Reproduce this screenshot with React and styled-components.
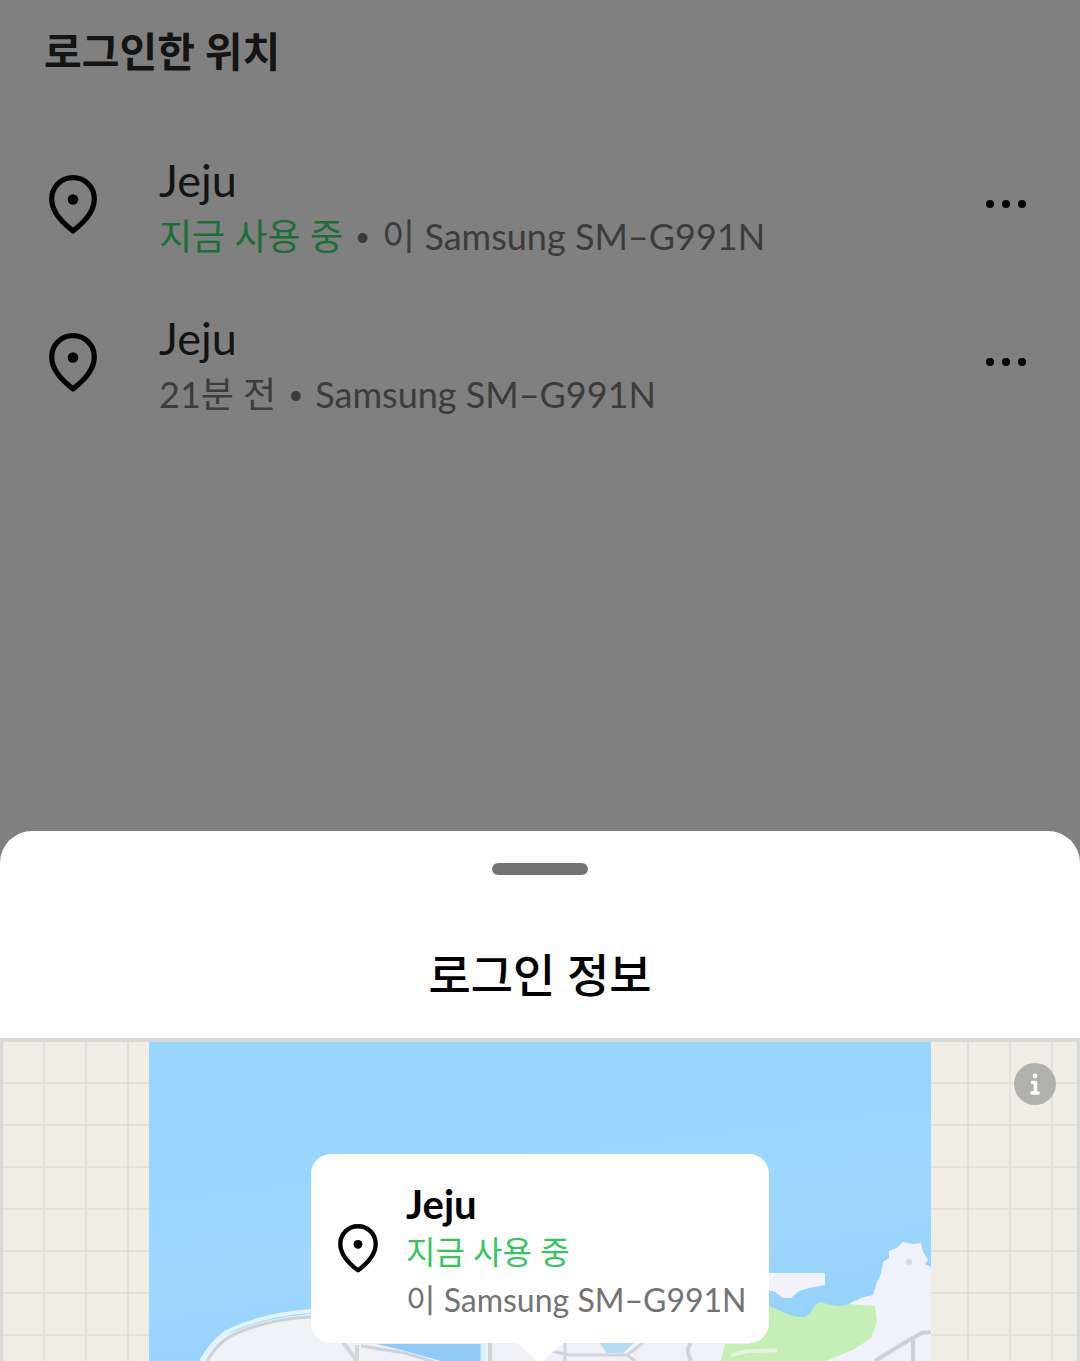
import React from 'react';
import styled, { createGlobalStyle } from 'styled-components';

const GlobalStyle = createGlobalStyle`
  * {
    box-sizing: border-box;
  }
  body {
    margin: 0;
    background-color: #808080;
    font-family: Lato, "Noto Sans CJK KR", sans-serif;
  }
  h1, h2, p, ul {
    margin: 0;
    padding: 0;
  }
`
const Wrapper = styled.div`
  width: 100%;
  min-height: 100vh;
  display: flex;
  flex-direction: column;
  background-color: #808080;
`
const LoginSection = styled.main`
  flex: 1;
  padding: 20px 44px;
`
const SectionTitle = styled.h1`
  color: #141414;
  font-size: 41px;
  line-height: 64px;
  font-weight: 700;
`
const LoginList = styled.ul`
  margin-top: 68px;
  list-style: none;
`
const LoginItem = styled.li`
  display: flex;
  align-items: center;
  height: 104px;
  margin-bottom: 54px;
`
const PinSlot = styled.div`
  display: flex;
  flex: none;
  width: 115px;
  padding-left: 5px;
`
const LoginInfo = styled.div`
  flex: 1;
  padding-top: 10px;
`
const City = styled.p`
  color: #141414;
  font-size: 45px;
  line-height: 56px;
`
const Detail = styled.p`
  color: #3c3c3c;
  font-size: 36px;
  line-height: 56px;
`
const Active = styled.span`
  color: #1c6e37;
`
const Bullet = styled.span`
  margin: 0 4px;
  font-family: "Liberation Sans", sans-serif;
`
const MenuButton = styled.button`
  display: flex;
  justify-content: center;
  align-items: center;
  width: 60px;
  height: 60px;
  padding: 0;
  border: none;
  background: none;
`
const Sheet = styled.section`
  background-color: #fff;
  border-radius: 32px 32px 0 0;
  overflow: hidden;
`
const SheetHeader = styled.header`
  display: flex;
  flex-direction: column;
  align-items: center;
  height: 207px;
  padding-top: 32px;
`
const Handle = styled.div`
  width: 96px;
  height: 12px;
  border-radius: 6px;
  background-color: #737373;
`
const SheetTitle = styled.h2`
  margin-top: 66px;
  color: #000;
  font-size: 46px;
  line-height: 68px;
  font-weight: 500;
`
const MapFrame = styled.div`
  position: relative;
  display: flex;
  justify-content: center;
  height: 323px;
  border: 3px solid #d9d9d9;
  border-top-width: 4px;
  border-bottom: none;
  background-color: #f0ede5;
  background-image:
    linear-gradient(to right, transparent 40px, #e2e0d9 40px),
    linear-gradient(to bottom, transparent 40px, #e5e2da 40px);
  background-size: 42px 42px;
`
const MapTile = styled.svg`
  display: block;
  width: 782px;
  height: 319px;
`
const InfoButton = styled.button`
  position: absolute;
  top: 21px;
  right: 21px;
  width: 42px;
  height: 42px;
  padding: 0;
  border: none;
  border-radius: 50%;
  background: none;
`
const Callout = styled.div`
  position: absolute;
  top: 112px;
  left: 50%;
  transform: translateX(-50%);
  display: flex;
  align-items: center;
  width: 458px;
  height: 189px;
  padding-left: 27px;
  border-radius: 20px;
  background-color: #fff;
`
const CalloutText = styled.div`
  margin-left: 28px;
  padding-top: 6px;
  white-space: nowrap;
`
const CalloutCity = styled.p`
  color: #000;
  font-size: 40px;
  line-height: 48px;
  font-weight: 700;
`
const CalloutLine = styled.p`
  color: ${(props) => props.$color};
  font-size: 32px;
  line-height: 48px;
`
const Tail = styled.svg`
  position: absolute;
  top: 100%;
  left: 50%;
  transform: translateX(-50%);
`

function Pin({ width, height }) {
  return (
    <svg width={width} height={height} viewBox="0 0 48 59" fill="none" aria-hidden="true">
      <path
        d="M24 2.7C12 2.7 2.7 12 2.7 24C2.7 36.5 13 47.5 24 55.8C35 47.5 45.3 36.5 45.3 24C45.3 12 36 2.7 24 2.7Z"
        stroke="#000"
        strokeWidth="5.2"
        strokeLinejoin="round"
      />
      <circle cx="24" cy="24.5" r="5.3" fill="#000" />
    </svg>
  )
}

function MapPicture() {
  return (
    <MapTile viewBox="0 0 782 319" preserveAspectRatio="xMidYMin slice" role="img" aria-label="Jeju">
      <defs>
        <linearGradient id="sea" x1="0" y1="0" x2="0.3" y2="1">
          <stop offset="0.45" stopColor="#99d6ff" />
          <stop offset="0.7" stopColor="#9fd7fc" />
          <stop offset="1" stopColor="#97d2fb" />
        </linearGradient>
      </defs>
      <rect width="782" height="319" fill="url(#sea)" />
      {/* west coast */}
      <path d="M52 319C62 304 70 294 86 289C110 279 136 274 162 272L196 290L206 319Z" fill="#eff2f7" />
      <path d="M52 319C62 304 70 292 86 286C110 276 136 271 162 269" fill="none" stroke="#e3f3fd" strokeWidth="4" />
      <path d="M58 319C66 306 74 297 88 291C112 281 138 276 162 275" fill="none" stroke="#cbd3da" strokeWidth="3" />
      <path d="M190 298H620V319H196Z" fill="#eff1f7" />
      <path d="M228 302H336V319H292L256 309Z" fill="#8ecbf7" />
      <path d="M194 300L208 319M208 303V319" fill="none" stroke="#d3d7d8" strokeWidth="4" />
      <path d="M212 304L256 311L288 321" fill="none" stroke="#ccd4d9" strokeWidth="3" />
      <path d="M334 300V319" stroke="#d8eef8" strokeWidth="5" />
      <path d="M341 300V319" stroke="#cfd5d7" strokeWidth="4" />
      <path d="M450 300H486L474 311H458Z" fill="#b5dcf2" />
      <path d="M402 309L420 313H478L494 301M478 313L486 319M416 301V319" fill="none" stroke="#d0d4da" strokeWidth="3" />
      <path d="M542 301C536 308 540 313 542 319" fill="none" stroke="#d0d4da" strokeWidth="4" />
      {/* east coast */}
      <path
        d="M618 264C634 268 638 275 654 275C664 274 662 262 672 260C682 264 694 266 702 261C714 254 724 258 730 258L742 296L716 319H572L576 302H600Z"
        fill="#c5efb6"
      />
      <path d="M582 314C600 306 614 310 628 308" fill="none" stroke="#e3f2e3" strokeWidth="4" />
      <path d="M618 231H676V243L660 246L650 249L642 256H634L626 250L618 248Z" fill="#f1f2fa" />
      <path
        d="M700 262L712 256L724 253L728 240L732 232L734 220L740 216L740 209L748 206L754 200L764 202L772 201L774 210L779 218L776 222L782 225V319H676L704 308L722 296L728 280L726 264Z"
        fill="#eff2fa"
      />
      <path d="M726 319L760 298L773 291L782 290M764 296V319" fill="none" stroke="#ccd0d8" strokeWidth="4" />
      <circle cx="760" cy="220" r="3" fill="#ddd6e3" />
    </MapTile>
  )
}

const logins = [
  { id: 1, city: 'Jeju', status: '지금 사용 중', active: true, device: '이 Samsung SM–G991N' },
  { id: 2, city: 'Jeju', status: '21분 전', active: false, device: 'Samsung SM–G991N' },
]

function App() {
  return (
    <Wrapper>
      <GlobalStyle />
      <LoginSection>
        <SectionTitle>로그인한 위치</SectionTitle>
        <LoginList>
          {logins.map(login => {
            return (
              <LoginItem key={login.id}>
                <PinSlot>
                  <Pin width={48} height={59} />
                </PinSlot>
                <LoginInfo>
                  <City>{login.city}</City>
                  <Detail>
                    {login.active ? <Active>{login.status}</Active> : login.status}
                    {' '}<Bullet>•</Bullet>{' '}
                    {login.device}
                  </Detail>
                </LoginInfo>
                <MenuButton aria-label="더 보기">
                  <svg width="40" height="8" viewBox="0 0 40 8" aria-hidden="true">
                    <circle cx="4" cy="4" r="4" />
                    <circle cx="20" cy="4" r="4" />
                    <circle cx="36" cy="4" r="4" />
                  </svg>
                </MenuButton>
              </LoginItem>
            )
          })}
        </LoginList>
      </LoginSection>
      <Sheet>
        <SheetHeader>
          <Handle />
          <SheetTitle>로그인 정보</SheetTitle>
        </SheetHeader>
        <MapFrame>
          <MapPicture />
          <InfoButton aria-label="정보">
            <svg width="42" height="42" viewBox="0 0 42 42" aria-hidden="true">
              <circle cx="21" cy="21" r="21" fill="#b0b0ad" />
              <circle cx="21" cy="13" r="2.4" fill="#fff" />
              <path d="M18.5 19.5H21.5V30M18 30H24" fill="none" stroke="#fff" strokeWidth="3.6" strokeLinecap="round" strokeLinejoin="round" />
            </svg>
          </InfoButton>
          <Callout>
            <Pin width={40} height={49} />
            <CalloutText>
              <CalloutCity>Jeju</CalloutCity>
              <CalloutLine $color="#35c55e">지금 사용 중</CalloutLine>
              <CalloutLine $color="#737373">이 Samsung SM–G991N</CalloutLine>
            </CalloutText>
            <Tail width="46" height="20" viewBox="0 0 46 20" aria-hidden="true">
              <path d="M0 0H46L26 18Q23 20 20 18Z" fill="#fff" />
            </Tail>
          </Callout>
        </MapFrame>
      </Sheet>
    </Wrapper>
  )
}

export default App
